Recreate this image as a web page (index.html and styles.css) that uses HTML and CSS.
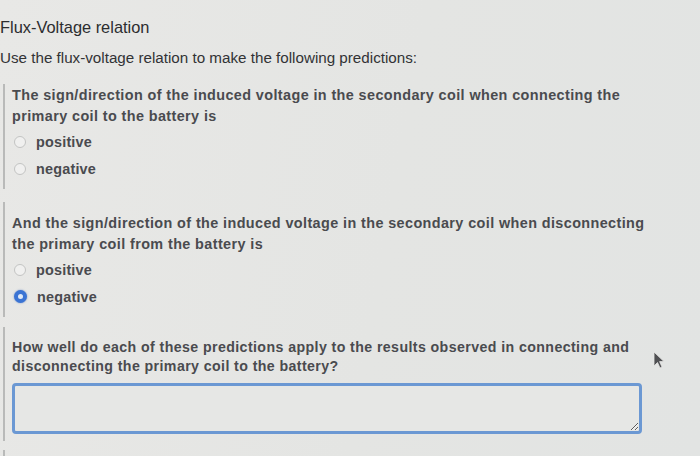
FILE: index.html
```html
<!DOCTYPE html>
<html lang="en">
<head>
<meta charset="UTF-8" />
<meta name="viewport" content="width=device-width, initial-scale=1.0"/>
<title>Flux-Voltage relation</title>
<link rel="stylesheet" href="styles.css">
</head>
<body>

<div class="page">
    <h1 class="title">Flux-Voltage relation</h1>
    <p class="intro">Use the flux-voltage relation to make the following predictions:</p>

    <div class="question first">
        <p class="prompt">The sign/direction of the induced voltage in the secondary coil when connecting the primary coil to the battery is</p>
        <ul class="options">
            <li><span class="radio"></span>positive</li>
            <li><span class="radio"></span>negative</li>
        </ul>
    </div>

    <div class="question">
        <p class="prompt">And the sign/direction of the induced voltage in the secondary coil when disconnecting the primary coil from the battery is</p>
        <ul class="options">
            <li><span class="radio"></span>positive</li>
            <li><span class="radio checked"></span>negative</li>
        </ul>
    </div>

    <div class="question open">
        <p class="prompt small">How well do each of these predictions apply to the results observed in connecting and disconnecting the primary coil to the battery?</p>
        <textarea class="answer"></textarea>
    </div>

    <div class="question next"></div>

    <!-- mouse pointer -->
    <svg class="pointer" width="12" height="18" viewBox="0 0 12 18">
        <path d="M1 1 L1 15 L4.5 11.5 L7 17 L9 16 L6.6 10.6 L11 10.6 Z" fill="#4f5053" stroke="#e6e6e4" stroke-width="0.8"/>
    </svg>
</div>

</body>
</html>
```

FILE: styles.css
```css
body {
    margin: 0;
    background: linear-gradient(100deg, #e8e8e6 0%, #e4e5e3 55%, #e2e4e3 100%);
    font-family: "Liberation Sans", Arial, Helvetica, sans-serif;
    color: #45464a;
    height: 456px;
    overflow: hidden;
}

.page {
    position: relative;
    padding-top: 17px;
}

.title {
    margin: 0;
    font-size: 16.4px;
    line-height: 20px;
    font-weight: normal;
    color: #2c2d2f;
}

.intro {
    margin: 11px 0 0;
    font-size: 15.2px;
    line-height: 20px;
    color: #323335;
}

.question {
    margin: 13px 0 0 3px;
    padding: 11px 0 7px 7px;
    border-left: 2px solid #b9bab9;
}

.question.first {
    margin-top: 16px;
    padding-top: 1px;
}

.question.open {
    margin-top: 10px;
}

.question.next {
    margin-top: 9px;
    height: 12px;
    padding: 0;
}

.prompt {
    max-width: 640px;
    margin: 0;
    font-size: 14.4px;
    line-height: 21px;
    font-weight: bold;
    letter-spacing: 0.4px;
    color: #4a4b4f;
}

.prompt.small {
    font-size: 14.2px;
    line-height: 19px;
}

.options {
    list-style: none;
    margin: 1px 0 0;
    padding: 0;
}

.options li {
    display: flex;
    align-items: center;
    gap: 10px;
    height: 27px;
    font-size: 14.4px;
    font-weight: bold;
    letter-spacing: 0.2px;
    color: #4a4b4f;
}

.radio {
    box-sizing: border-box;
    width: 12px;
    height: 12px;
    margin-left: 2px;
    border-radius: 50%;
    border: 1px solid #c3c4c3;
    background: #f0f0ef;
    position: relative;
}

.radio.checked {
    width: 13px;
    height: 13px;
    border: none;
    background: #3b74d4;
    box-shadow: 0 0 2px rgba(40, 90, 180, 0.6);
}

.radio.checked::after {
    content: "";
    position: absolute;
    top: 4px;
    left: 4px;
    width: 5px;
    height: 5px;
    border-radius: 50%;
    background: #dfe9f7;
}

.answer {
    display: block;
    box-sizing: border-box;
    width: 630px;
    height: 51px;
    margin-top: 7px;
    border: 3px solid #6b98d3;
    border-radius: 4px;
    background: #e6e7e5;
    outline: none;
    resize: both;
}

.pointer {
    position: absolute;
    left: 653px;
    top: 351px;
}
```
